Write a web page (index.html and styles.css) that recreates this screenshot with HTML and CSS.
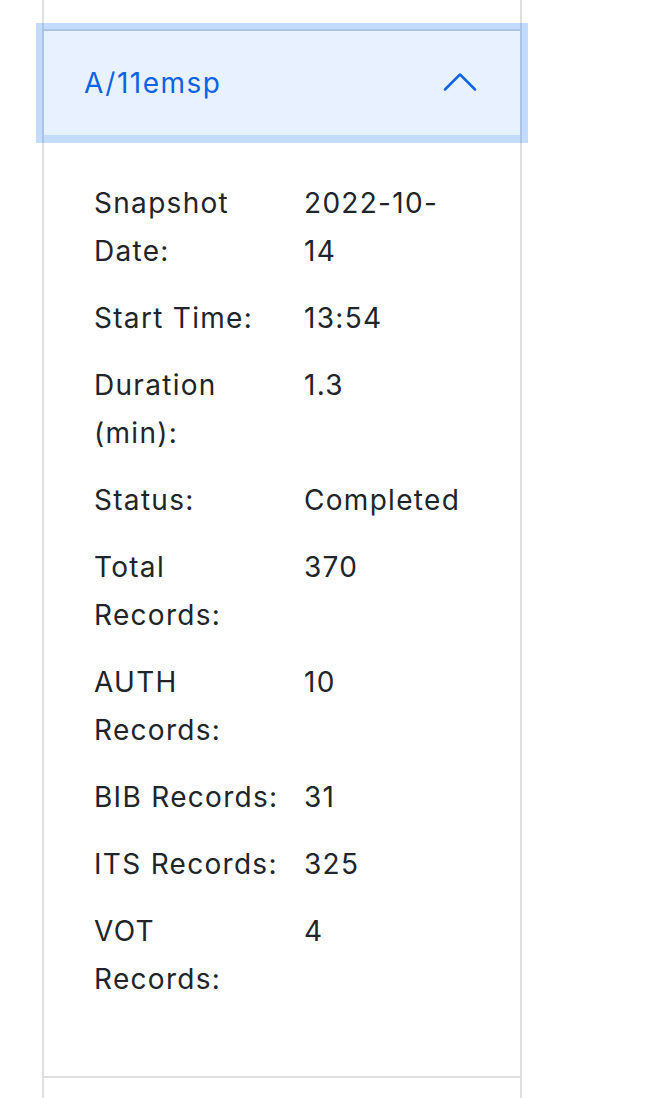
FILE: index.html
```html
<!DOCTYPE html>
<html lang="en">
<head>
<meta charset="utf-8">
<title>Snapshot</title>
<link rel="stylesheet" href="styles.css">
</head>
<body>
<div class="accordion">
  <div class="acc-item acc-prev"></div>
  <div class="acc-item">
    <h2 class="acc-header">
      <button class="acc-button" type="button">
        <span class="acc-title">A/11emsp</span>
        <svg class="acc-icon" viewBox="0 0 16 16" width="40" height="40" aria-hidden="true">
          <path fill="#0c63e4" d="M1.646 4.646a.5.5 0 0 1 .708 0L8 10.293l5.646-5.647a.5.5 0 0 1 .708.708l-6 6a.5.5 0 0 1-.708 0l-6-6a.5.5 0 0 1 0-.708z" transform="rotate(180 8 8)"/>
        </svg>
      </button>
    </h2>
    <div class="acc-body">
      <dl class="details">
        <dt>Snapshot Date:</dt><dd>2022-10-14</dd>
        <dt>Start Time:</dt><dd>13:54</dd>
        <dt>Duration (min):</dt><dd>1.3</dd>
        <dt>Status:</dt><dd>Completed</dd>
        <dt>Total Records:</dt><dd>370</dd>
        <dt>AUTH Records:</dt><dd>10</dd>
        <dt>BIB Records:</dt><dd>31</dd>
        <dt>ITS Records:</dt><dd>325</dd>
        <dt>VOT Records:</dt><dd>4</dd>
      </dl>
    </div>
  </div>
  <div class="acc-item acc-next"></div>
</div>
</body>
</html>
```
FILE: styles.css
```css
html, body {
  margin: 0;
  padding: 0;
  background: #fff;
}
body {
  font-family: Inter, "Liberation Sans", sans-serif;
  font-size: 28px;
  line-height: 48px;
  letter-spacing: 1.3px;
  color: #212529;
}
.accordion {
  margin-left: 42px;
  width: 480px;
}
.acc-item {
  border-left: 2px solid #dfdfdf;
  border-right: 2px solid #dfdfdf;
  border-bottom: 2px solid #dfdfdf;
}
.acc-prev {
  height: 29px;
}
.acc-next {
  height: 40px;
  border-bottom: 0;
}
.acc-header {
  margin: 0;
  font-size: inherit;
  font-weight: 400;
}
.acc-button {
  position: relative;
  z-index: 3;
  display: flex;
  align-items: center;
  justify-content: space-between;
  width: 100%;
  height: 104px;
  margin: 0;
  padding: 0 40px 0 40px;
  border: 0;
  background: #e7f1ff;
  color: #0c63e4;
  font: inherit;
  letter-spacing: 1.5px;
  text-align: left;
  box-shadow: 0 0 0 8px rgba(13, 110, 253, 0.25);
  outline: 0;
}
.acc-title {
  display: block;
  margin-top: -1px;
}
.acc-icon {
  display: block;
  flex: none;
  margin-top: -2px;
}
.acc-body {
  padding: 44px 56px 73px 50px;
}
.details {
  display: grid;
  grid-template-columns: 190px 160px;
  column-gap: 20px;
  row-gap: 19px;
  margin: 0;
}
.details dt,
.details dd {
  margin: 0;
  font-weight: 400;
}
```
